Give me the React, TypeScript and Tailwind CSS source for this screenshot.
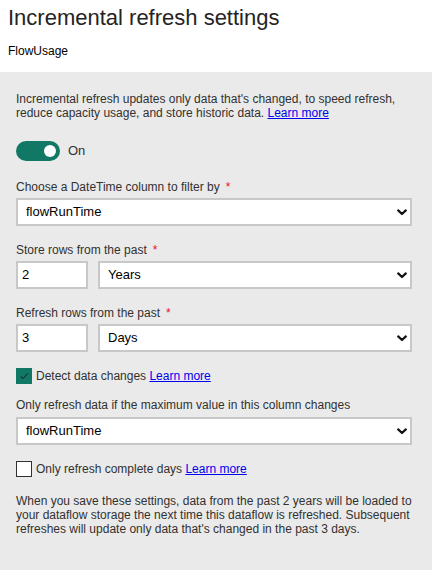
import React from "react"

const Chevron = () => (
  <svg width="10" height="7" viewBox="0 0 10 7" className="shrink-0">
    <path d="M1.2 1.4 L5 5 L8.8 1.4" fill="none" stroke="#111" strokeWidth="2.2" strokeLinecap="round" strokeLinejoin="round" />
  </svg>
)

function SelectBox({ value, className = "" }: { value: string; className?: string }) {
  return (
    <div className={`flex h-[28px] items-center justify-between border-2 border-[#c8c8c8] bg-white pl-2 pr-[3px] ${className}`}>
      <span className="text-[13px] text-black">{value}</span>
      <Chevron />
    </div>
  )
}

function NumberBox({ value }: { value: string }) {
  return (
    <div className="flex h-[28px] w-[72px] shrink-0 items-center border-2 border-[#c8c8c8] bg-white pl-1 text-[13px] text-black">
      {value}
    </div>
  )
}

function Label({ text, required }: { text: string; required?: boolean }) {
  return (
    <div className="text-[12px] leading-[14px] text-[#323130]">
      {text}
      {required && <span className="ml-[6px] text-[#e81123]">*</span>}
    </div>
  )
}

function LearnMore() {
  return <a href="#" className="text-[#0000ee] underline">Learn more</a>
}

export default function App() {
  return (
    <div className="h-[570px] w-[432px] bg-[#eaeaea] font-['Liberation_Sans',Arial,sans-serif]">
      {/* Header */}
      <header className="h-[72px] bg-white px-2 pt-[5px]">
        <h1 className="text-[22px] leading-[26px] text-[#252423]">Incremental refresh settings</h1>
        <div className="mt-[13px] text-[12px] leading-[14px] text-black">FlowUsage</div>
      </header>

      <div className="pl-4 pr-5 pt-[20px]">
        <p className="text-[12px] leading-[14px] text-[#323130]">
          Incremental refresh updates only data that's changed, to speed refresh, reduce capacity usage, and store historic data. <LearnMore />
        </p>

        {/* Toggle */}
        <div className="mt-[21px] flex items-center gap-2">
          <div className="flex h-[20px] w-[44px] items-center justify-end rounded-full bg-[#117865] pr-1">
            <div className="h-[12px] w-[12px] rounded-full bg-white" />
          </div>
          <span className="text-[13px] text-[#323130]">On</span>
        </div>

        <div className="mt-[19px]">
          <Label text="Choose a DateTime column to filter by" required />
          <SelectBox value="flowRunTime" className="mt-[4px]" />
        </div>

        <div className="mt-[17px]">
          <Label text="Store rows from the past" required />
          <div className="mt-[4px] flex gap-[10px]">
            <NumberBox value="2" />
            <SelectBox value="Years" className="flex-1" />
          </div>
        </div>

        <div className="mt-[17px]">
          <Label text="Refresh rows from the past" required />
          <div className="mt-[4px] flex gap-[10px]">
            <NumberBox value="3" />
            <SelectBox value="Days" className="flex-1" />
          </div>
        </div>

        {/* Detect data changes */}
        <div className="mt-[16px] flex h-[16px] items-center gap-[4px] text-[12px] text-[#323130]">
          <div className="flex h-[16px] w-[16px] items-center justify-center bg-[#117865]">
            <svg width="12" height="12" viewBox="0 0 12 12">
              <path d="M2.5 6.2 L5 8.6 L9.8 3.4" fill="none" stroke="#1b1a19" strokeWidth="1" />
            </svg>
          </div>
          <span>
            Detect data changes <LearnMore />
          </span>
        </div>

        <div className="mt-[14px]">
          <Label text="Only refresh data if the maximum value in this column changes" />
          <SelectBox value="flowRunTime" className="mt-[5px]" />
        </div>

        <div className="mt-[16px] flex h-[16px] items-center gap-[4px] text-[12px] text-[#323130]">
          <div className="h-[16px] w-[16px] border border-[#323130] bg-white" />
          <span>
            Only refresh complete days <LearnMore />
          </span>
        </div>

        <p className="mt-[17px] text-[12px] leading-[14px] text-[#323130]">
          When you save these settings, data from the past 2 years will be loaded to your dataflow storage the next time this dataflow is refreshed. Subsequent refreshes will update only data that's changed in the past 3 days.
        </p>
      </div>
    </div>
  )
}
